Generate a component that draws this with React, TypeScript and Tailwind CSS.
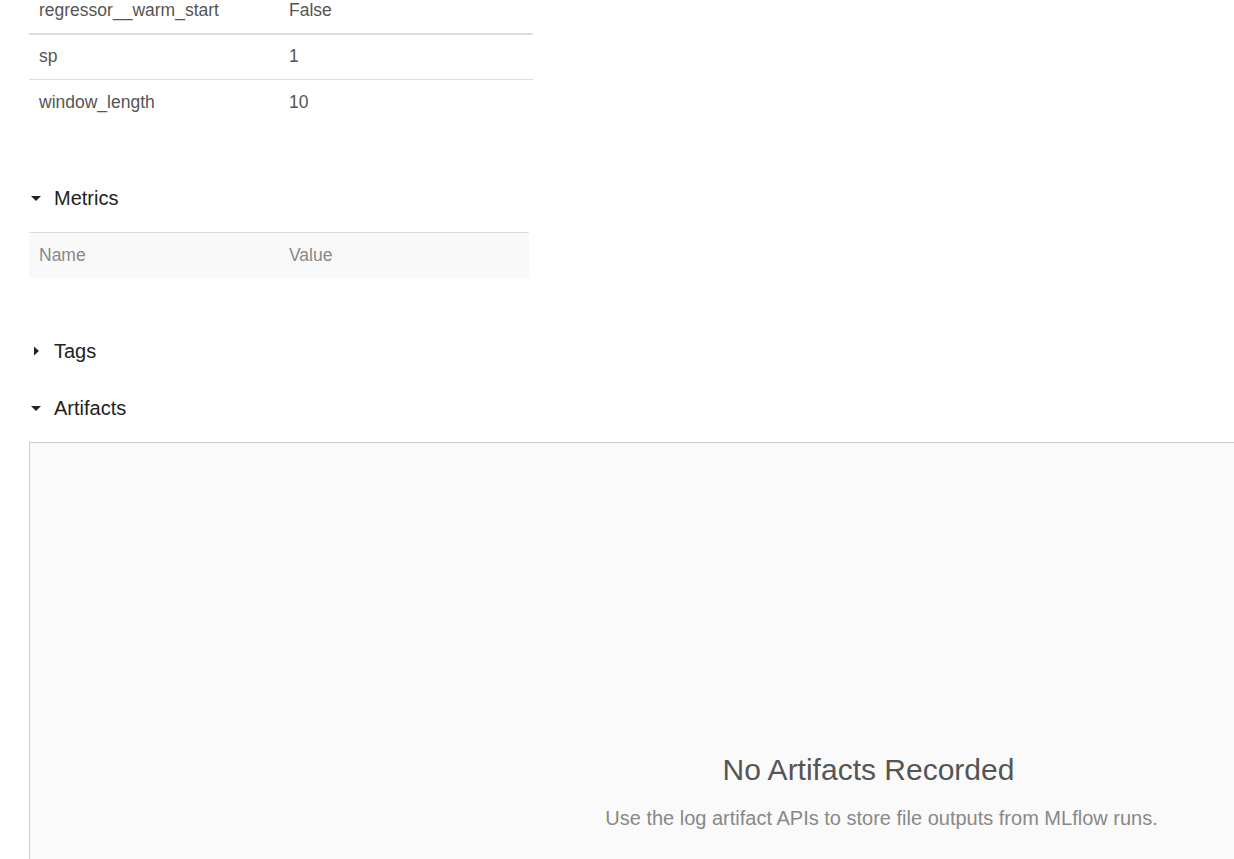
const params = [
  { name: "regressor__warm_start", value: "False" },
  { name: "sp", value: "1" },
  { name: "window_length", value: "10" },
];

function Caret({ open }: { open: boolean }) {
  return open ? (
    <svg width="12" height="12" viewBox="0 0 12 12" className="ml-[30px] mr-[12px]">
      <path d="M1 4 L11 4 L6 9 Z" fill="#222" />
    </svg>
  ) : (
    <svg width="12" height="12" viewBox="0 0 12 12" className="ml-[30px] mr-[12px]">
      <path d="M4 1.5 L9 6 L4 10.5 Z" fill="#222" />
    </svg>
  );
}

function SectionHeader({ title, open, className }: { title: string; open: boolean; className: string }) {
  return (
    <div className={`flex items-center h-[30px] ${className}`}>
      <Caret open={open} />
      <span className="text-[20px] text-[#222]">{title}</span>
    </div>
  );
}

export default function App() {
  return (
    <div
      className="w-[1234px] h-[859px] overflow-hidden bg-white"
      style={{ fontFamily: '"Liberation Sans", Arial, sans-serif' }}
    >
      {/* Parameters table (scrolled) */}
      <div className="-mt-[10px] ml-[29px] w-[504px] text-[17.5px] text-[#555]">
        {params.map((p, i) => (
          <div
            key={p.name}
            className={`flex items-center h-[45px] ${
              i === 0
                ? "border-b-2 border-[#ddd] pb-[3px]"
                : i < params.length - 1
                ? "border-b border-[#ddd] pb-[1px]"
                : "pb-[1px]"
            }`}
          >
            <span className="pl-[10px] w-[260px]">{p.name}</span>
            <span>{p.value}</span>
          </div>
        ))}
      </div>

      {/* Metrics */}
      <SectionHeader title="Metrics" open={true} className="mt-[58px]" />
      <div className="mt-[19px] ml-[29px] w-[500px] border-t border-[#ddd] bg-[#f9f9f9] h-[46px] flex items-center text-[17.5px] text-[#888]">
        <span className="pl-[10px] w-[260px]">Name</span>
        <span>Value</span>
      </div>

      {/* Tags */}
      <SectionHeader title="Tags" open={false} className="mt-[58px]" />

      {/* Artifacts */}
      <SectionHeader title="Artifacts" open={true} className="mt-[27px]" />
      <div className="mt-[19px] ml-[29px] w-[1679px] h-[500px] border border-[#ccc] bg-[#fafafa] flex flex-col items-center pt-[309px]">
        <div className="text-[30px] leading-[36px] text-[#555]">No Artifacts Recorded</div>
        <div className="mt-[18px] pl-[26px] text-[20px] leading-[24px] text-[#888]">
          Use the log artifact APIs to store file outputs from MLflow runs.
        </div>
      </div>
    </div>
  );
}
